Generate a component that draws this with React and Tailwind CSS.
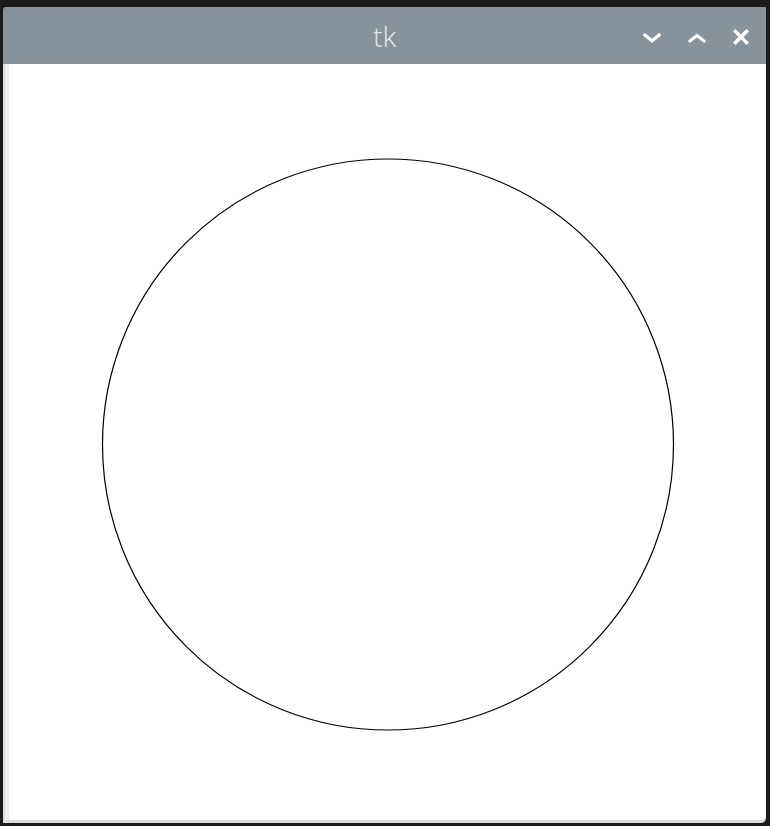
import React from 'react'

function ChevronDown() {
  return (
    <svg width="18" height="12" viewBox="0 0 18 12" className="block">
      <polyline points="2,3 9,9 16,3" fill="none" stroke="#ffffff" strokeWidth="3.2" strokeLinecap="square" />
    </svg>
  )
}

function ChevronUp() {
  return (
    <svg width="18" height="10" viewBox="0 0 18 10" className="block">
      <polyline points="2,8 9,2.5 16,8" fill="none" stroke="#ffffff" strokeWidth="3" strokeLinecap="square" />
    </svg>
  )
}

function CloseIcon() {
  return (
    <svg width="16" height="16" viewBox="0 0 16 16" className="block">
      <path d="M2.5 2.5 L13.5 13.5 M13.5 2.5 L2.5 13.5" stroke="#ffffff" strokeWidth="3.6" strokeLinecap="square" />
    </svg>
  )
}

export default function App() {
  return (
    <div className="h-[826px] w-[770px] bg-[#1b1b1b] flex pt-[7px] pl-[3px] pr-[4px] pb-[3px] overflow-hidden">
      {/* tk window */}
      <div className="flex-1 flex flex-col">
        <div className="h-[57px] bg-[#87929a] rounded-tl-[3px] flex items-center relative">
          <span
            style={{ fontFamily: "'Noto Sans', 'DejaVu Sans', sans-serif" }}
            className="absolute left-[370px] top-[15px] text-[28px] leading-none font-light text-[#dde1e4]"
          >
            tk
          </span>
          <div className="ml-auto flex items-end gap-[27px] pr-[17px] pt-[2px]">
            <ChevronDown />
            <div className="mb-[1px]"><ChevronUp /></div>
            <div className="mb-[-1px]"><CloseIcon /></div>
          </div>
        </div>
        <div className="flex-1 flex bg-[#dcdcdc] pl-[2px] pb-[3px] rounded-br-[5px]">
          <div className="flex-1 flex bg-white border-l-[4px] border-[#eeeeee] rounded-br-[5px]">
            <svg width="756" height="756" viewBox="0 0 756 756" className="block">
              <circle cx="379" cy="380.5" r="285.5" fill="none" stroke="#000000" strokeWidth="1.2" />
            </svg>
          </div>
        </div>
      </div>
    </div>
  )
}
